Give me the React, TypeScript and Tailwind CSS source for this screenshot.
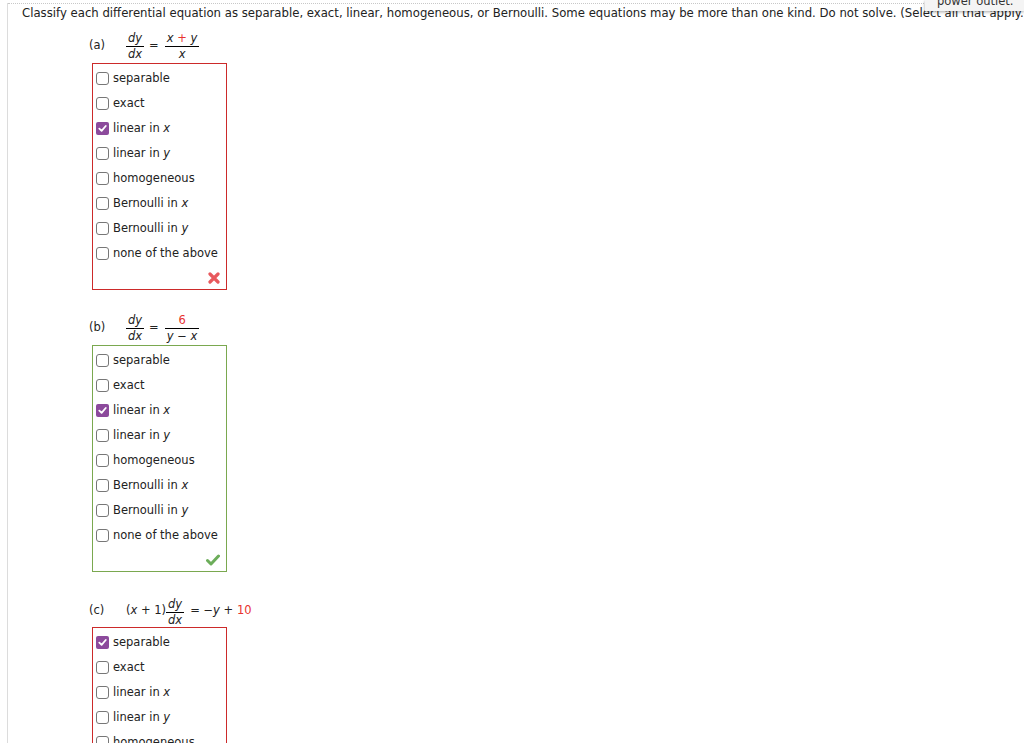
import React from 'react';

const font = { fontFamily: '"DejaVu Sans", Verdana, sans-serif' };

const V: React.FC<{ children: React.ReactNode }> = ({ children }) => <i className="italic">{children}</i>;

const Frac: React.FC<{ top: React.ReactNode; bottom: React.ReactNode; className?: string }> = ({ top, bottom, className }) => (
    <span className={`inline-flex flex-col items-center ${className ?? ''}`}>
        <span className="px-[2px] leading-[15px]">{top}</span>
        <span className="w-full border-t border-black" />
        <span className="px-[2px] leading-[14px]">{bottom}</span>
    </span>
);

const CheckBox: React.FC<{ checked?: boolean }> = ({ checked }) =>
    checked ? (
        <span className="flex h-[13px] w-[13px] items-center justify-center rounded-[2px] bg-[#8c4a9c]">
            <svg width="9" height="9" viewBox="0 0 10 10">
                <path d="M1.5 5.2 L4 7.6 L8.6 2.2" fill="none" stroke="white" strokeWidth="2" strokeLinecap="round" strokeLinejoin="round" />
            </svg>
        </span>
    ) : (
        <span className="h-[13px] w-[13px] rounded-[3px] border border-[#777] bg-white" />
    );

type Opt = { label: React.ReactNode; checked?: boolean };

const options = (checkedIndex: number): Opt[] =>
    [
        { label: 'separable' },
        { label: 'exact' },
        { label: <>linear in <V>x</V></> },
        { label: <>linear in <V>y</V></> },
        { label: 'homogeneous' },
        { label: <>Bernoulli in <V>x</V></> },
        { label: <>Bernoulli in <V>y</V></> },
        { label: 'none of the above' },
    ].map((o, i) => ({ ...o, checked: i === checkedIndex }));

const Cross = () => (
    <svg width="12" height="12" viewBox="0 0 12 12">
        <path d="M2 2 L10 10 M10 2 L2 10" stroke="#e8595d" strokeWidth="3.2" strokeLinecap="round" />
    </svg>
);

const Tick = () => (
    <svg width="14" height="12" viewBox="0 0 14 12">
        <path d="M1.5 6.5 L5 10 L12.5 2" fill="none" stroke="#6cad5a" strokeWidth="3" strokeLinecap="round" strokeLinejoin="round" />
    </svg>
);

const AnswerBox: React.FC<{ opts: Opt[]; status: 'wrong' | 'right' | 'none' }> = ({ opts, status }) => (
    <div
        className={`ml-[92px] w-[135px] border pt-[2px] ${
            status === 'right' ? 'border-[#7aa84f]' : 'border-[#cc2a2a]'
        }`}
    >
        {opts.map((o, i) => (
            <div key={i} className="flex h-[25px] items-center gap-[4px] pl-[3px]">
                <CheckBox checked={o.checked} />
                <span>{o.label}</span>
            </div>
        ))}
        {status !== 'none' && (
            <div className="flex h-[23px] items-center justify-end pr-[6px]">{status === 'wrong' ? <Cross /> : <Tick />}</div>
        )}
    </div>
);

const App: React.FC = () => {
    return (
        <div className="relative h-[743px] w-[1024px] overflow-hidden bg-white text-[11.5px] text-[#222]" style={font}>
            {/* tooltip remnant */}
            <div className="absolute right-0 top-0 z-10 h-[11px] w-[99px] overflow-hidden bg-[#f4f4f4] shadow-[0_1px_3px_rgba(0,0,0,0.35)]">
                <div className="-mt-[7px] pl-[12px] text-[#333]">power outlet.</div>
            </div>

            <div className="ml-[7px] h-full border-l border-[#dcdcdc]">
                <div className="mt-[3px] border-t border-dotted border-[#c8c8c8]" />
                <div className="whitespace-nowrap pl-[14px] pt-[2px] text-[11.7px] leading-[14px]">
                    Classify each differential equation as separable, exact, linear, homogeneous, or Bernoulli. Some equations may be more than one kind. Do not solve. (Select all that apply.)
                </div>

                {/* (a) */}
                <div className="ml-[81px] mt-[11px] flex h-[30px] items-center">
                    <span className="w-[37px]">(a)</span>
                    <Frac top={<V>dy</V>} bottom={<V>dx</V>} />
                    <span className="mx-[5px]">=</span>
                    <Frac
                        top={
                            <>
                                <V>x</V> <span className="text-[#e8332f]">+</span> <V>y</V>
                            </>
                        }
                        bottom={<V>x</V>}
                        className="px-[1px]"
                    />
                </div>
                <div className="-ml-[8px] mt-[2px]">
                    <AnswerBox opts={options(2)} status="wrong" />
                </div>

                {/* (b) */}
                <div className="ml-[81px] mt-[23px] flex h-[30px] items-center">
                    <span className="w-[37px]">(b)</span>
                    <Frac top={<V>dy</V>} bottom={<V>dx</V>} />
                    <span className="mx-[5px]">=</span>
                    <Frac
                        top={<span className="text-[#e8332f]">6</span>}
                        bottom={
                            <>
                                <V>y</V> − <V>x</V>
                            </>
                        }
                        className="px-[1px]"
                    />
                </div>
                <div className="-ml-[8px] mt-[2px]">
                    <AnswerBox opts={options(2)} status="right" />
                </div>

                {/* (c) */}
                <div className="ml-[81px] mt-[24px] flex h-[30px] items-center">
                    <span className="w-[37px]">(c)</span>
                    <span>
                        (<V>x</V> + 1)
                    </span>
                    <Frac top={<V>dy</V>} bottom={<V>dx</V>} className="mt-[2px]" />
                    <span className="ml-[6px]">
                        = −<V>y</V> + <span className="text-[#e8332f]">10</span>
                    </span>
                </div>
                <div className="-ml-[8px] mt-[1px]">
                    <AnswerBox opts={options(0)} status="none" />
                </div>
            </div>
        </div>
    );
};

export default App;
